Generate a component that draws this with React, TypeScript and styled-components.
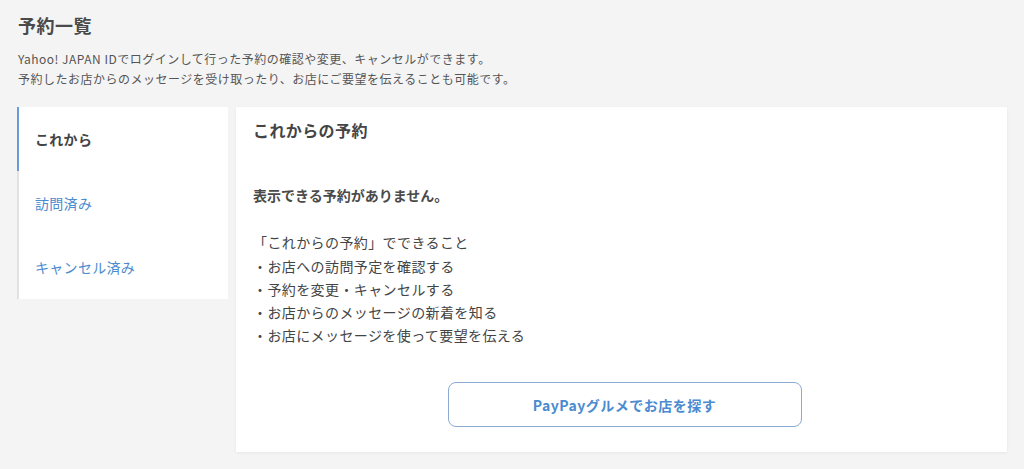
import React from 'react';
import styled, { createGlobalStyle } from 'styled-components';

const GlobalStyle = createGlobalStyle`
  html, body {
    margin: 0;
    padding: 0;
    background: #f4f4f4;
  }
  body {
    font-family: "Noto Sans CJK JP", "Noto Sans", sans-serif;
    color: #555;
  }
`;

const S = {
  Page: styled.div`
    padding: 12px 17px 16px 17px;
    box-sizing: border-box;
    width: 1024px;
    min-height: 469px;
  `,

  Title: styled.h1`
    margin: 0 0 0 1px;
    font-size: 18px;
    line-height: 26px;
    font-weight: bold;
    color: #4a4a4a;
    letter-spacing: 0.5px;
  `,

  Lead: styled.p`
    margin: 11px 0 0 1px;
    font-size: 12px;
    line-height: 20px;
    color: #555;
    letter-spacing: 0.5px;
  `,

  Body: styled.div`
    display: flex;
    align-items: flex-start;
    gap: 8px;
    margin-top: 18px;
  `,

  Nav: styled.ul`
    list-style: none;
    margin: 0;
    padding: 0;
    width: 211px;
    background: #fff;
    flex-shrink: 0;
  `,

  NavItem: styled.li<{ $active?: boolean }>`
    height: 64px;
    display: flex;
    align-items: center;
    padding-left: 16px;
    border-left: 2px solid ${(p) => (p.$active ? '#6b9bd6' : '#e2e2e2')};
    font-size: 14px;
    letter-spacing: 0.3px;
    font-weight: ${(p) => (p.$active ? 'bold' : 'normal')};
    color: ${(p) => (p.$active ? '#444' : '#4b8bd0')};
  `,

  Card: styled.section`
    flex: 1;
    background: #fff;
    padding: 12px 17px 25px 17px;
    box-shadow: 0 1px 3px rgba(0, 0, 0, 0.06);
    box-sizing: border-box;
    min-height: 345px;
  `,

  CardTitle: styled.h2`
    margin: 0;
    font-size: 16px;
    line-height: 22px;
    font-weight: bold;
    color: #444;
    letter-spacing: 0.4px;
  `,

  Empty: styled.p`
    margin: 43px 0 0 0;
    font-size: 14px;
    line-height: 22px;
    font-weight: bold;
    color: #4a4a4a;
  `,

  Heading: styled.p`
    margin: 25px 0 1px 0;
    font-size: 14px;
    line-height: 23px;
    color: #444;
    letter-spacing: 0.4px;
  `,

  List: styled.ul`
    list-style: none;
    margin: 0;
    padding: 0;
  `,

  Item: styled.li`
    font-size: 14px;
    line-height: 23px;
    color: #444;
    letter-spacing: 0.4px;
  `,

  Actions: styled.div`
    display: flex;
    justify-content: center;
    margin-top: 35px;
    padding-left: 6px;
  `,

  Button: styled.button`
    width: 354px;
    height: 45px;
    background: #fff;
    border: 1px solid #8aaad3;
    border-radius: 8px;
    font-family: inherit;
    font-size: 14px;
    font-weight: bold;
    letter-spacing: 0.5px;
    color: #4b8bd0;
    cursor: pointer;
  `,
};

const tabs = [
  { label: 'これから', active: true },
  { label: '訪問済み' },
  { label: 'キャンセル済み' },
];

const features = [
  'お店への訪問予定を確認する',
  '予約を変更・キャンセルする',
  'お店からのメッセージの新着を知る',
  'お店にメッセージを使って要望を伝える',
];

const App: React.FC = () => {
  return (
    <>
      <GlobalStyle />
      <S.Page>
        <S.Title>予約一覧</S.Title>
        <S.Lead>
          Yahoo! JAPAN IDでログインして行った予約の確認や変更、キャンセルができます。
          <br />
          予約したお店からのメッセージを受け取ったり、お店にご要望を伝えることも可能です。
        </S.Lead>
        <S.Body>
          <S.Nav>
            {tabs.map((t) => (
              <S.NavItem key={t.label} $active={t.active}>
                {t.label}
              </S.NavItem>
            ))}
          </S.Nav>
          <S.Card>
            <S.CardTitle>これからの予約</S.CardTitle>
            <S.Empty>表示できる予約がありません。</S.Empty>
            <S.Heading>「これからの予約」でできること</S.Heading>
            <S.List>
              {features.map((f) => (
                <S.Item key={f}>・{f}</S.Item>
              ))}
            </S.List>
            <S.Actions>
              <S.Button type="button">PayPayグルメでお店を探す</S.Button>
            </S.Actions>
          </S.Card>
        </S.Body>
      </S.Page>
    </>
  );
};

export default App;
